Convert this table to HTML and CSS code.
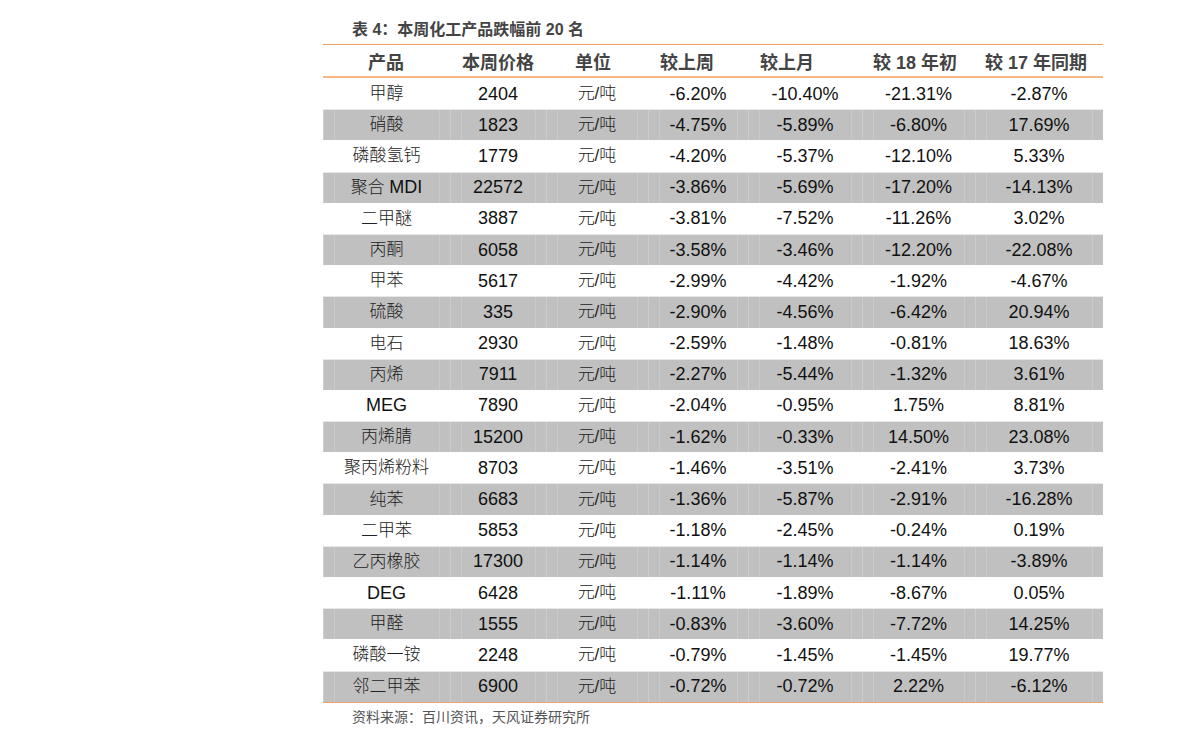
FILE: index.html
```html
<!DOCTYPE html>
<html lang="zh">
<head>
<meta charset="utf-8">
<title>表4</title>
<link rel="stylesheet" href="styles.css">
</head>
<body>
<div class="wrap">
  <div class="title">表 4：本周化工产品跌幅前 20 名</div>
  <table class="tbl">
    <colgroup>
      <col class="c1"><col class="c2"><col class="c3"><col class="c4"><col class="c5"><col class="c6"><col class="c7">
    </colgroup>
    <thead>
      <tr>
        <th class="h1">产品</th><th class="h2">本周价格</th><th class="h3">单位</th><th class="h4">较上周</th><th class="h5">较上月</th><th class="h6">较 18 年初</th><th class="h7">较 17 年同期</th>
      </tr>
    </thead>
    <tbody>
      <tr><td class="cjk">甲醇</td><td>2404</td><td class="cjk">元/吨</td><td>-6.20%</td><td>-10.40%</td><td>-21.31%</td><td>-2.87%</td></tr>
      <tr class="g"><td class="cjk">硝酸</td><td>1823</td><td class="cjk">元/吨</td><td>-4.75%</td><td>-5.89%</td><td>-6.80%</td><td>17.69%</td></tr>
      <tr><td class="cjk">磷酸氢钙</td><td>1779</td><td class="cjk">元/吨</td><td>-4.20%</td><td>-5.37%</td><td>-12.10%</td><td>5.33%</td></tr>
      <tr class="g"><td class="cjk">聚合 <span class="lat">MDI</span></td><td>22572</td><td class="cjk">元/吨</td><td>-3.86%</td><td>-5.69%</td><td>-17.20%</td><td>-14.13%</td></tr>
      <tr><td class="cjk">二甲醚</td><td>3887</td><td class="cjk">元/吨</td><td>-3.81%</td><td>-7.52%</td><td>-11.26%</td><td>3.02%</td></tr>
      <tr class="g"><td class="cjk">丙酮</td><td>6058</td><td class="cjk">元/吨</td><td>-3.58%</td><td>-3.46%</td><td>-12.20%</td><td>-22.08%</td></tr>
      <tr><td class="cjk">甲苯</td><td>5617</td><td class="cjk">元/吨</td><td>-2.99%</td><td>-4.42%</td><td>-1.92%</td><td>-4.67%</td></tr>
      <tr class="g"><td class="cjk">硫酸</td><td>335</td><td class="cjk">元/吨</td><td>-2.90%</td><td>-4.56%</td><td>-6.42%</td><td>20.94%</td></tr>
      <tr><td class="cjk">电石</td><td>2930</td><td class="cjk">元/吨</td><td>-2.59%</td><td>-1.48%</td><td>-0.81%</td><td>18.63%</td></tr>
      <tr class="g"><td class="cjk">丙烯</td><td>7911</td><td class="cjk">元/吨</td><td>-2.27%</td><td>-5.44%</td><td>-1.32%</td><td>3.61%</td></tr>
      <tr><td class="cjk"><span class="lat">MEG</span></td><td>7890</td><td class="cjk">元/吨</td><td>-2.04%</td><td>-0.95%</td><td>1.75%</td><td>8.81%</td></tr>
      <tr class="g"><td class="cjk">丙烯腈</td><td>15200</td><td class="cjk">元/吨</td><td>-1.62%</td><td>-0.33%</td><td>14.50%</td><td>23.08%</td></tr>
      <tr><td class="cjk">聚丙烯粉料</td><td>8703</td><td class="cjk">元/吨</td><td>-1.46%</td><td>-3.51%</td><td>-2.41%</td><td>3.73%</td></tr>
      <tr class="g"><td class="cjk">纯苯</td><td>6683</td><td class="cjk">元/吨</td><td>-1.36%</td><td>-5.87%</td><td>-2.91%</td><td>-16.28%</td></tr>
      <tr><td class="cjk">二甲苯</td><td>5853</td><td class="cjk">元/吨</td><td>-1.18%</td><td>-2.45%</td><td>-0.24%</td><td>0.19%</td></tr>
      <tr class="g"><td class="cjk">乙丙橡胶</td><td>17300</td><td class="cjk">元/吨</td><td>-1.14%</td><td>-1.14%</td><td>-1.14%</td><td>-3.89%</td></tr>
      <tr><td class="cjk"><span class="lat">DEG</span></td><td>6428</td><td class="cjk">元/吨</td><td>-1.11%</td><td>-1.89%</td><td>-8.67%</td><td>0.05%</td></tr>
      <tr class="g"><td class="cjk">甲醛</td><td>1555</td><td class="cjk">元/吨</td><td>-0.83%</td><td>-3.60%</td><td>-7.72%</td><td>14.25%</td></tr>
      <tr><td class="cjk">磷酸一铵</td><td>2248</td><td class="cjk">元/吨</td><td>-0.79%</td><td>-1.45%</td><td>-1.45%</td><td>19.77%</td></tr>
      <tr class="g"><td class="cjk">邻二甲苯</td><td>6900</td><td class="cjk">元/吨</td><td>-0.72%</td><td>-0.72%</td><td>2.22%</td><td>-6.12%</td></tr>
    </tbody>
  </table>
  <div class="source">资料来源：百川资讯，天风证券研究所</div>
</div>
</body>
</html>
```

FILE: styles.css
```css
html, body {
  margin: 0;
  padding: 0;
  background: #ffffff;
}

body {
  font-family: "Liberation Sans", "Noto Sans CJK SC", sans-serif;
  color: #111;
}

.wrap {
  width: 780px;
  margin-left: 323px;
  padding-top: 19px;
}

.title {
  padding-left: 29px;
  font-size: 16px;
  line-height: 22px;
  font-weight: 700;
  color: #444;
  height: 25px;
}

.tbl {
  width: 780px;
  border-collapse: collapse;
  table-layout: fixed;
  border-top: 1.5px solid #f39d5c;
  border-bottom: 1.5px solid #f0a36c;
}

.c1 { width: 127px; }
.c2 { width: 96px; }
.c3 { width: 102px; }
.c4 { width: 100px; }
.c5 { width: 114px; }
.c6 { width: 113px; }
.c7 { width: 128px; }

.tbl th {
  height: 31px;
  padding: 0;
  font-size: 18px;
  font-weight: 700;
  color: #444;
  text-align: left;
  border-bottom: 2px solid #f9b685;
  white-space: nowrap;
}

.h1 { padding-left: 45px !important; }
.h2 { padding-left: 12px !important; }
.h3 { padding-left: 29px !important; }
.h4 { padding-left: 12px !important; }
.h5 { padding-left: 12px !important; }
.h6 { padding-left: 11px !important; }
.h7 { padding-left: 10px !important; }

.tbl td {
  height: 31.2px;
  padding: 0;
  text-align: center;
  font-size: 18px;
  line-height: 20px;
  color: #111;
  white-space: nowrap;
}

.tbl td.cjk {
  font-size: 17px;
  font-weight: 300;
  color: #222;
  padding-top: 1px;
  height: 30.2px;
}

.tbl td .lat {
  font-size: 18px;
  font-weight: 400;
  color: #111;
}

.tbl tr.g td {
  background:
    linear-gradient(to bottom, #e8e8e8 0, #e8e8e8 1px, transparent 1px),
    linear-gradient(to right,
      #cdcdcd 0, #cdcdcd 1px, transparent 1px,
      transparent 11px, #cacaca 11px, #cacaca 12px, transparent 12px,
      transparent calc(100% - 11px), #cacaca calc(100% - 11px), #cacaca calc(100% - 10px), transparent calc(100% - 10px)),
    #c0c0c0;
}

.source {
  padding-left: 29px;
  padding-top: 4px;
  font-size: 14px;
  line-height: 20px;
  color: #555;
}
```
